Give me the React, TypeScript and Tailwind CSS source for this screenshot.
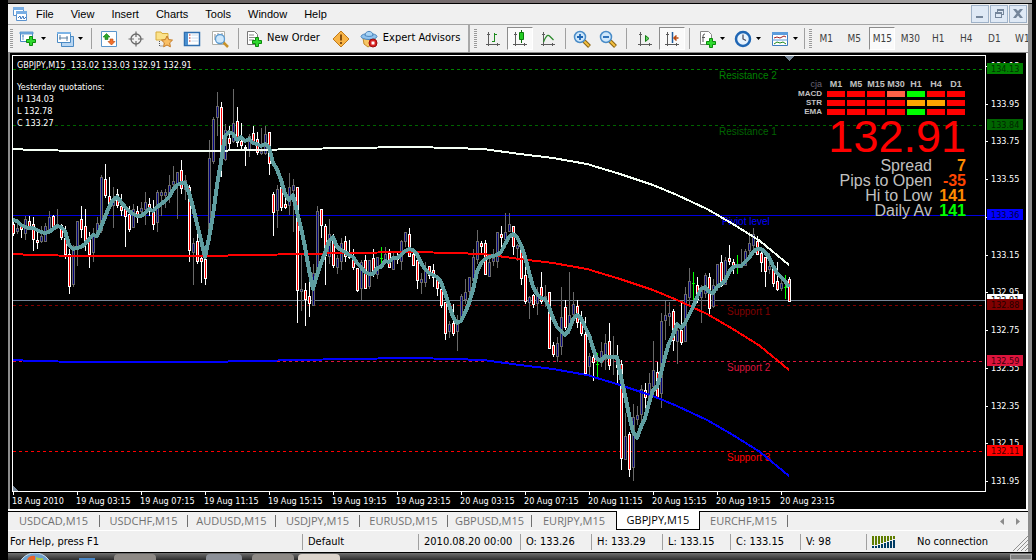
import type { ReactNode } from "react";

type Candle = [dir: number, high: number, top: number, bottom: number, low: number];

// Rows are screen rows; the plot starts at TOP and one bar takes STEP columns.
const TOP = 56;
const STEP = 4;

const candles: Candle[] = [
  [-1, 220, 224, 233, 235], [1, 222, 228, 231, 233], [-1, 223, 226, 229, 237], [1, 216, 219, 233, 239],
  [-1, 216, 221, 227, 228], [-1, 217, 224, 239, 250], [-1, 230, 240, 242, 248], [1, 226, 236, 241, 242],
  [1, 223, 226, 241, 241], [1, 211, 217, 229, 229], [-1, 215, 216, 228, 229], [1, 209, 224, 227, 228],
  [-1, 224, 225, 237, 239], [-1, 226, 238, 254, 258], [-1, 249, 254, 286, 293], [1, 245, 246, 284, 286],
  [1, 221, 221, 247, 265], [-1, 206, 219, 229, 237], [-1, 209, 226, 242, 250], [-1, 232, 240, 254, 267],
  [1, 228, 236, 252, 261], [1, 217, 223, 236, 237], [1, 175, 177, 230, 232], [-1, 164, 179, 195, 197],
  [-1, 177, 196, 206, 207], [1, 187, 198, 205, 227], [-1, 189, 194, 205, 207], [-1, 194, 206, 210, 215],
  [-1, 207, 209, 216, 246], [-1, 206, 214, 229, 231], [1, 204, 209, 227, 227], [-1, 206, 211, 214, 222],
  [1, 202, 208, 211, 217], [1, 192, 202, 209, 224], [-1, 198, 204, 211, 215], [-1, 200, 210, 224, 229],
  [1, 190, 192, 222, 231], [1, 190, 192, 195, 215], [1, 189, 192, 195, 207], [1, 175, 185, 197, 202],
  [1, 166, 181, 184, 190], [1, 172, 172, 184, 218], [-1, 160, 170, 188, 193], [1, 175, 180, 189, 199],
  [-1, 185, 187, 250, 261], [1, 238, 243, 252, 284], [-1, 232, 241, 261, 263], [-1, 257, 258, 261, 282],
  [-1, 257, 259, 278, 284], [1, 140, 158, 235, 236], [1, 117, 119, 161, 163], [1, 92, 106, 117, 135],
  [-1, 102, 107, 158, 176], [1, 124, 130, 159, 160], [-1, 126, 138, 143, 148], [1, 89, 123, 141, 142],
  [-1, 107, 121, 142, 146], [-1, 123, 141, 145, 148], [-1, 145, 147, 148, 165], [1, 134, 136, 150, 156],
  [-1, 126, 133, 141, 142], [-1, 132, 139, 152, 154], [1, 128, 151, 153, 154], [1, 126, 134, 153, 154],
  [-1, 132, 132, 163, 174], [-1, 192, 194, 212, 235], [1, 185, 189, 210, 227], [-1, 186, 187, 207, 210],
  [-1, 197, 204, 207, 208], [1, 173, 187, 205, 214], [1, 179, 185, 190, 231], [-1, 187, 187, 290, 322],
  [1, 253, 289, 291, 310], [-1, 283, 290, 299, 325], [-1, 280, 296, 303, 316], [1, 264, 273, 305, 305],
  [1, 206, 211, 273, 274], [-1, 209, 209, 225, 237], [-1, 224, 226, 255, 284], [1, 219, 234, 256, 263],
  [-1, 234, 236, 265, 267], [1, 255, 258, 267, 273], [1, 238, 243, 261, 269], [-1, 236, 241, 256, 261],
  [-1, 240, 255, 257, 258], [-1, 249, 256, 267, 269], [-1, 268, 268, 290, 291], [1, 260, 262, 288, 299],
  [-1, 255, 260, 288, 288], [1, 260, 260, 286, 288], [-1, 249, 258, 273, 276], [1, 257, 257, 274, 278],
  [0, 247, 258, 258, 264], [1, 247, 254, 262, 263], [-1, 249, 253, 267, 267], [1, 253, 259, 269, 269],
  [-1, 253, 256, 259, 263], [1, 240, 241, 261, 269], [1, 232, 232, 241, 246], [-1, 228, 234, 256, 256],
  [-1, 253, 254, 265, 265], [-1, 258, 260, 280, 288], [1, 273, 279, 282, 293], [1, 262, 270, 282, 286],
  [-1, 266, 266, 275, 278], [-1, 264, 270, 277, 286], [-1, 277, 277, 288, 295], [-1, 287, 289, 305, 307],
  [-1, 302, 302, 333, 339], [1, 321, 324, 331, 337], [-1, 304, 323, 333, 335], [1, 315, 324, 331, 350],
  [1, 294, 296, 321, 321], [1, 279, 292, 299, 303], [1, 277, 277, 291, 301], [1, 249, 257, 280, 289],
  [1, 230, 241, 259, 263], [-1, 241, 243, 246, 254], [-1, 240, 243, 274, 274], [1, 257, 262, 276, 276],
  [1, 249, 258, 261, 265], [1, 232, 232, 261, 267], [-1, 226, 234, 237, 248], [1, 213, 232, 239, 247],
  [1, 213, 224, 231, 231], [-1, 226, 226, 246, 254], [1, 244, 245, 248, 260], [-1, 247, 247, 278, 284],
  [-1, 266, 275, 301, 303], [1, 296, 297, 302, 318], [-1, 294, 295, 304, 307], [1, 287, 292, 303, 314],
  [-1, 272, 287, 301, 303], [1, 285, 296, 300, 306], [-1, 292, 292, 348, 348], [-1, 342, 345, 354, 356],
  [1, 337, 343, 356, 361], [1, 287, 317, 346, 354], [-1, 300, 307, 327, 329], [1, 272, 315, 325, 333],
  [1, 292, 304, 314, 323], [-1, 300, 306, 322, 327], [-1, 311, 321, 333, 335], [-1, 317, 334, 373, 374],
  [1, 353, 356, 366, 374], [-1, 355, 357, 362, 380], [0, 353, 364, 364, 377], [1, 342, 351, 362, 366],
  [1, 334, 343, 359, 369], [-1, 323, 341, 365, 369], [1, 336, 355, 358, 374], [-1, 345, 357, 367, 382],
  [-1, 360, 364, 458, 469], [1, 413, 436, 459, 459], [-1, 432, 434, 469, 476], [1, 404, 417, 467, 480],
  [1, 406, 415, 419, 424], [1, 385, 389, 414, 420], [-1, 383, 390, 397, 410], [1, 373, 383, 403, 405],
  [1, 341, 370, 386, 393], [-1, 362, 372, 397, 397], [1, 313, 321, 393, 407], [1, 301, 315, 320, 339],
  [1, 302, 313, 316, 325], [-1, 309, 311, 340, 350], [1, 324, 330, 341, 363], [-1, 303, 330, 342, 344],
  [1, 287, 294, 341, 341], [1, 268, 281, 297, 304], [0, 272, 283, 283, 301], [-1, 277, 285, 299, 302],
  [1, 285, 287, 297, 322], [1, 273, 275, 293, 297], [-1, 273, 277, 308, 314], [1, 279, 285, 306, 307],
  [1, 264, 264, 287, 290], [-1, 255, 262, 285, 286], [1, 257, 260, 284, 284], [-1, 245, 258, 261, 264],
  [-1, 259, 262, 265, 273], [0, 255, 264, 264, 274], [1, 249, 264, 267, 267], [1, 249, 251, 265, 265],
  [1, 232, 243, 250, 257], [1, 228, 234, 245, 250], [-1, 236, 241, 254, 254], [-1, 250, 253, 262, 271],
  [-1, 257, 257, 271, 286], [1, 253, 266, 269, 273], [-1, 264, 265, 283, 286], [-1, 262, 281, 289, 290],
  [1, 279, 283, 288, 290], [0, 275, 287, 287, 299], [-1, 277, 279, 301, 301],
];

const movingAverage = [
  220, 221, 225, 227, 228, 228, 230, 232, 233, 232, 229, 226, 227, 231, 245, 249, 248, 247, 244, 239,
  235, 236, 227, 217, 207, 200, 197, 202, 207, 211, 214, 216, 216, 213, 209, 211, 207, 204, 201, 197,
  190, 185, 183, 183, 193, 207, 224, 240, 257, 238, 215, 185, 162, 136, 132, 134, 140, 137, 141, 139,
  143, 144, 146, 144, 147, 163, 169, 180, 194, 200, 195, 212, 228, 247, 270, 289, 275, 263, 253, 241,
  237, 247, 250, 252, 255, 257, 263, 267, 272, 274, 274, 268, 267, 261, 262, 258, 258, 255, 251, 249,
  250, 254, 263, 269, 273, 275, 277, 282, 293, 305, 317, 323, 321, 313, 303, 290, 272, 263, 259, 257,
  256, 255, 252, 244, 237, 234, 237, 245, 257, 272, 287, 294, 298, 299, 307, 318, 327, 331, 335, 330,
  319, 315, 318, 327, 335, 348, 359, 361, 356, 357, 357, 357, 377, 395, 415, 432, 438, 427, 418, 403,
  390, 387, 373, 357, 343, 335, 324, 328, 323, 315, 307, 297, 289, 287, 292, 293, 287, 284, 281, 272,
  267, 266, 266, 262, 258, 252, 249, 249, 252, 257, 266, 273, 277, 281, 287,
];

const band: [number, number][] = [
  [0, 254], [20, 255], [70, 256], [190, 256], [240, 255], [290, 254], [330, 253], [400, 252], [440, 253],
  [470, 254], [507, 259], [540, 263], [574, 269], [607, 279], [640, 290], [664, 300], [694, 314],
  [720, 329], [747, 346], [776, 370],
];

const levels = [
  { price: "134.13", y: 69, tag: "#008000", ink: "#003200", line: "#008000", dash: "3 3" },
  { price: "133.84", y: 125, tag: "#006400", ink: "#002600", line: "#006400", dash: "3 3" },
  { price: "133.36", y: 215, tag: "#0000ff", ink: "#00003c", line: "#0000e0", dash: undefined },
  { price: "132.91", y: 300, tag: "#ffffff", ink: "#000000", line: "#778899", dash: undefined },
  { price: "132.88", y: 305, tag: "#800000", ink: "#220000", line: "#800000", dash: "3 3" },
  { price: "132.59", y: 361, tag: "#dc143c", ink: "#38000c", line: "#dc143c", dash: "3 3" },
  { price: "132.11", y: 451, tag: "#ff0000", ink: "#3c0000", line: "#ff0000", dash: "3 3" },
];

const levelNames = [
  { text: "Resistance 2", x: 706, y: 79, color: "#008000" },
  { text: "Resistance 1", x: 706, y: 135, color: "#006400" },
  { text: "Piviot level", x: 709, y: 225, color: "#0000ff" },
  { text: "Support 1", x: 714, y: 315, color: "#800000" },
  { text: "Support 2", x: 714, y: 371, color: "#dc143c" },
  { text: "Support 3", x: 714, y: 461, color: "#ff0000" },
];

const prices = [
  ["134.15", 66], ["133.95", 104], ["133.75", 141], ["133.55", 179], ["133.35", 217], ["133.15", 255],
  ["132.95", 292], ["132.75", 330], ["132.55", 368], ["132.35", 406], ["132.15", 443], ["131.95", 481],
] as const;

const times = [
  "18 Aug 2010", "19 Aug 03:15", "19 Aug 07:15", "19 Aug 11:15", "19 Aug 15:15", "19 Aug 19:15", "19 Aug 23:15",
  "20 Aug 03:15", "20 Aug 07:15", "20 Aug 11:15", "20 Aug 15:15", "20 Aug 19:15", "20 Aug 23:15",
];

const R = "bg-[#ff0000]";
const G = "bg-[#00ff00]";
const O = "bg-[#ffa500]";
const T = "bg-[#ff6347]";
const frames = ["M1", "M5", "M15", "M30", "H1", "H4", "D1"];
const signals = [
  { name: "MACD", cells: [R, R, R, T, G, R, R] },
  { name: "STR", cells: [R, R, R, R, O, O, R] },
  { name: "EMA", cells: [R, R, R, R, G, R, R] },
];

const stats = [
  { label: "Spread", value: "7", color: "text-[#ff8c00]" },
  { label: "Pips to Open", value: "-35", color: "text-[#ff4500]" },
  { label: "Hi to Low", value: "141", color: "text-[#ff8c00]" },
  { label: "Daily Av", value: "141", color: "text-[#00ff00]" },
];

function points(rows: [number, number][], shift = 0) {
  return rows.map(([x, y]) => `${x},${y - TOP + shift}`).join(" ");
}

/* Toolbar pieces */

function Sep() {
  return <span className="mx-1 h-[21px] w-px flex-none bg-[#a0a0a0]" />;
}

function Grip() {
  return <span className="h-5 w-[3px] flex-none bg-[repeating-linear-gradient(#9a9a9a_0_1px,#f4f4f4_1px_2px)]" />;
}

interface ToolProps {
  label: string;
  width?: string;
  pressed?: boolean;
  children: ReactNode;
}

function Tool({ label, width = "w-7", pressed = false, children }: ToolProps) {
  return (
    <button
      aria-label={label}
      title={label}
      className={`flex h-[23px] flex-none items-center justify-center ${width} ${
        pressed ? "border border-[#8c8c8c] border-r-white border-b-white bg-[#fafafa]" : ""
      }`}
    >
      {children}
    </button>
  );
}

function Icon({ children }: { children: ReactNode }) {
  return (
    <svg width="18" height="18" viewBox="0 0 18 18" fill="none" className="flex-none">
      {children}
    </svg>
  );
}

function Caret() {
  return (
    <svg width="5" height="3" viewBox="0 0 5 3" className="ml-1 flex-none">
      <path d="M0 0h5L2.5 3z" fill="#000" />
    </svg>
  );
}

function Plus({ x, y }: { x: number; y: number }) {
  return (
    <path
      transform={`translate(${x} ${y})`}
      d="M3.5.5h3v3h3v3h-3v3h-3v-3h-3v-3h3z"
      fill="#2fd82f"
      stroke="#0b8a0b"
    />
  );
}

function Axes() {
  return (
    <g stroke="#5c5c5c">
      <path d="M4.500 2v14M2 14.500h14" />
      <path d="M3 4.500h3M13.500 13v3" />
    </g>
  );
}

function Magnifier({ plus }: { plus?: boolean }) {
  return (
    <Icon>
      <path d="M11 11l5.500 5.500" stroke="#8a6414" strokeWidth="4" />
      <path d="M11 11l5 5" stroke="#f4c040" strokeWidth="2" />
      <circle cx="7" cy="7" r="5.500" fill="#cfe8fb" stroke="#4a8cc8" strokeWidth="1.500" />
      <path d={plus ? "M4 7h6M7 4v6" : "M4 7h6"} stroke="#1f66b4" strokeWidth="1.800" />
    </Icon>
  );
}

function MenuBar() {
  const items = ["File", "View", "Insert", "Charts", "Tools", "Window", "Help"];
  return (
    <header className="flex h-[21px] items-center border-b border-[#a6a6a6] bg-[#f0f0f0] pr-px">
      <svg width="15" height="15" viewBox="0 0 15 15" className="ml-[5px] flex-none">
        <path d="M.5.500h10v8H.5z" fill="#fff" stroke="#5b93cf" />
        <path d="M0 0h11v3H0z" fill="#79aee4" />
        <path d="M3.500 5.500h10v8h-10z" fill="#fff" stroke="#5b93cf" />
        <path d="M3 4h11v3H3z" fill="#79aee4" />
        <path d="M5 11l2-2 1 3 2-3 1 3 2-2" stroke="#3c78c0" fill="none" />
      </svg>
      <nav className="ml-2 flex flex-1 gap-[17px] font-['Liberation_Sans',sans-serif] text-[11px] leading-4 text-black">
        {items.map((item) => (
          <button key={item}>{item}</button>
        ))}
      </nav>
      <div className="flex gap-px">
        {[
          ["Minimize", "M4 10h7v2H4z"],
          ["Restore", "M6 3h7v6h-2v3H4V6h2zM7 5v1h4v2h1V5zM5 8v3h5V8z"],
          ["Close", "M3 3h3l2 2 2-2h3L9.500 7.500 13 12h-3L8 9.500 6 12H3l3.500-4.500z"],
        ].map(([name, d]) => (
          <button
            key={name}
            aria-label={name}
            className="flex h-[18px] w-[18px] items-center justify-center border border-[#9fb2c8] bg-[#dfe9f5]"
          >
            <svg width="16" height="16" viewBox="0 0 16 16" className="flex-none">
              <path d={d} fill="#75869b" fillRule="evenodd" />
            </svg>
          </button>
        ))}
      </div>
    </header>
  );
}

function ToolBar() {
  return (
    <div className="flex h-7 items-center overflow-hidden border-b border-[#8a8a8a] bg-[#f0f0f0] pl-0.5 text-[11px] text-black">
      <Grip />
      <Tool label="New chart" width="w-[38px]">
        <Icon>
          <path d="M1.500 2.500h12v9h-12z" fill="#fff" stroke="#4a8ac4" />
          <path d="M1 2h13v2H1zM4 5v5M3 6h2" fill="#7db4e6" stroke="#4a8ac4" strokeWidth=".8" />
          <Plus x={7} y={6} />
        </Icon>
        <Caret />
      </Tool>
      <Tool label="Profiles" width="w-9">
        <Icon>
          <path d="M5.500 6.500h12v10h-12z" fill="#b8d6f2" stroke="#4a8ac4" />
          <path d="M1.500 2.500h13v10h-13z" fill="#fff" stroke="#4a8ac4" />
          <path d="M1 2h14v2H1z" fill="#7db4e6" />
          <path d="M4 5v5M3 8h9M11 6v5" stroke="#5a7fa0" />
        </Icon>
        <Caret />
      </Tool>
      <Sep />
      <Tool label="Market Watch" width="w-[26px]">
        <Icon>
          <path d="M1.500 1.500h15v15h-15z" fill="#fff" stroke="#5a96cc" />
          <path d="M6.500 3.500L10 7H8v2.500H5V7H3z" fill="#2ba52b" stroke="#137a13" strokeWidth=".6" />
          <path d="M11.500 15L8 11.500h2V9h3v2.500h2z" fill="#f2702c" stroke="#b84308" strokeWidth=".6" />
        </Icon>
      </Tool>
      <Tool label="Data Window">
        <Icon>
          <circle cx="9" cy="9" r="5" stroke="#6a6a6a" strokeWidth="1.300" />
          <path d="M9 1.500v5.500M9 11v5.500M1.500 9H7M11 9h5.500" stroke="#6a6a6a" strokeWidth="1.200" />
        </Icon>
      </Tool>
      <Tool label="Navigator">
        <Icon>
          <path d="M1 2h5l1 1.500h6V10H1z" fill="#fbe28a" stroke="#d8ac3c" />
          <path d="M4.500 11v5H8" stroke="#555" strokeDasharray="1 1" />
          <path d="M12 6l1.700 3.600 3.800.5-2.800 2.700.7 4L12 15l-3.400 1.800.7-4-2.800-2.700 3.800-.5z" fill="#f9bf65" stroke="#c47a24" />
        </Icon>
      </Tool>
      <Tool label="Terminal">
        <Icon>
          <path d="M1.500 2.500h15v13h-15z" fill="#fff" stroke="#2f6fb0" strokeWidth="1.500" />
          <path d="M2 3h3v12H2z" fill="#4a90d0" />
          <path d="M6 5h1.500M6 8h1.500M6 11h1.500" stroke="#b02020" />
          <path d="M8.500 5H15M8.500 8H15M8.500 11H15" stroke="#c8dcf0" />
        </Icon>
      </Tool>
      <Tool label="Strategy Tester">
        <Icon>
          <path d="M1.500 1.500h12v13h-12z" fill="#fff" stroke="#b0b0a8" />
          <path d="M4 4v6M7 3v4M11 3v4" stroke="#888" />
          <path d="M12 12l5 5" stroke="#c8922a" strokeWidth="2.500" />
          <circle cx="9" cy="9" r="4.500" fill="#cfe8fb" stroke="#5a9ad0" strokeWidth="1.300" />
        </Icon>
      </Tool>
      <Sep />
      <button className="ml-0.5 flex h-[23px] flex-none items-center gap-1 whitespace-nowrap">
        <Icon>
          <path d="M2.500 1.500h7l3 3v10h-10z" fill="#fff" stroke="#777" />
          <path d="M4 5h5M4 7.500h6M4 10h5" stroke="#888" />
          <Plus x={7} y={7} />
        </Icon>
        New Order
      </button>
      <Tool label="MetaEditor" width="ml-2 w-[26px]">
        <Icon>
          <path d="M9 1l8 8-8 8-8-8z" fill="#f8b446" stroke="#c07a1a" />
          <path d="M9 4.500v6M9 12v2" stroke="#7a4408" strokeWidth="1.800" />
        </Icon>
      </Tool>
      <button className="ml-1.5 flex h-[23px] flex-none items-center gap-[5px] whitespace-nowrap">
        <Icon>
          <path d="M3 8h12l-2 6-5 3-4-3z" fill="#f7c765" stroke="#c28a2a" />
          <ellipse cx="9" cy="6.500" rx="8" ry="3" fill="#8ec2ee" stroke="#4a84bc" />
          <path d="M5 5.500C5 0 13 0 13 5.500c-2 1.200-6 1.200-8 0z" fill="#a8d4f6" stroke="#4a84bc" />
          <circle cx="13" cy="13" r="4" fill="#d82020" stroke="#9a0c0c" />
          <path d="M11.500 11.500h3v3h-3z" fill="#fff" />
        </Icon>
        Expert Advisors
      </button>
      <span className="ml-2 h-full w-0.5 flex-none bg-[#a8a8a8]" />
      <span className="ml-1 flex">
        <Grip />
      </span>
      <Tool label="Bar Chart" width="ml-1 w-6">
        <Icon>
          <Axes />
          <path d="M10.500 3v9M10.500 4.500H13M8 11.500h2.500" stroke="#1c8a1c" />
        </Icon>
      </Tool>
      <Tool label="Candlesticks" width="ml-0.5 w-[26px]" pressed>
        <Icon>
          <Axes />
          <path d="M10.500 0v13" stroke="#0b6b0b" />
          <path d="M8.500 2.500h4v7h-4z" fill="#22cc22" stroke="#0b7a0b" />
        </Icon>
      </Tool>
      <Tool label="Line Chart" width="ml-0.5 w-[26px]">
        <Icon>
          <Axes />
          <path d="M4.500 12c2-5 4-8 6-6l4 4" stroke="#2c8a2c" strokeWidth="1.300" />
        </Icon>
      </Tool>
      <Sep />
      <Tool label="Zoom In" width="w-6">
        <Magnifier plus />
      </Tool>
      <Tool label="Zoom Out">
        <Magnifier />
      </Tool>
      <Sep />
      <Tool label="Auto Scroll" width="ml-0.5 w-6">
        <Icon>
          <Axes />
          <path d="M9.500 5.500l3.500 3-3.500 3z" fill="#5fd35f" stroke="#137a13" />
        </Icon>
      </Tool>
      <Tool label="Chart Shift" width="ml-0.5 w-[26px]" pressed>
        <Icon>
          <Axes />
          <path d="M9.500 2v11" stroke="#1f5c9c" strokeWidth="1.500" />
          <path d="M15.500 8H11M13.500 5.500L11 8l2.500 2.500" stroke="#b84a10" strokeWidth="1.500" />
        </Icon>
      </Tool>
      <Sep />
      <Tool label="Indicators" width="w-[34px]">
        <Icon>
          <path d="M2.500 1.500h8l3 3v10h-11z" fill="#fff" stroke="#888" />
          <path d="M5 12V6q0-2 2-2M4 7.500h3" stroke="#555" />
          <Plus x={8} y={8} />
        </Icon>
        <Caret />
      </Tool>
      <Tool label="Periods" width="ml-0.5 w-[34px]">
        <Icon>
          <circle cx="9" cy="9" r="7" fill="#e8f3fd" stroke="#1f66b4" strokeWidth="2.500" />
          <path d="M9 4.500V9l3 1.500" stroke="#445" strokeWidth="1.200" />
        </Icon>
        <Caret />
      </Tool>
      <Tool label="Templates" width="ml-1 w-8">
        <Icon>
          <path d="M1.500 2.500h15v13h-15z" fill="#fff" stroke="#3c7cc0" />
          <path d="M1 2h16v3H1zM1 9.500h16v1H1z" fill="#5c9cdc" />
          <path d="M3 8l3-1 3 1 4-2 2 1" stroke="#a02020" />
          <path d="M3 14l3-2 3 1 3-1 3 2" stroke="#208a20" />
        </Icon>
        <Caret />
      </Tool>
      <Sep />
      <Grip />
      <div className="flex flex-none text-[10px] text-[#404040]">
        {["M1", "M5", "M15", "M30", "H1", "H4", "D1", "W1"].map((tf) => (
          <button
            key={tf}
            className={`mx-px h-[23px] w-[26px] flex-none ${
              tf === "M15" ? "border border-[#8c8c8c] border-r-white border-b-white bg-[#fafafa]" : ""
            }`}
          >
            {tf}
          </button>
        ))}
      </div>
    </div>
  );
}

function Plot() {
  return (
    <svg className="block h-[435px] w-full" shapeRendering="crispEdges">
      {levels.map((l) => (
        <line
          key={l.price}
          x1="0"
          x2="100%"
          y1={l.y - TOP + 0.5}
          y2={l.y - TOP + 0.5}
          stroke={l.line}
          strokeDasharray={l.dash}
        />
      ))}
      {levelNames.map((n) => (
        <text key={n.text} x={n.x} y={n.y - TOP} fill={n.color} className="font-['Liberation_Sans',sans-serif] text-[10px]">
          {n.text}
        </text>
      ))}
      {candles.map(([dir, high, top, bottom, low], i) => {
        const x = i * STEP;
        if (dir === 0) {
          return (
            <g key={i} fill="#00ff00">
              <rect x={x} y={high - TOP} width="1" height={low - high} />
              <rect x={x - 1} y={top - TOP} width="3" height="1" />
            </g>
          );
        }
        return (
          <g key={i}>
            <rect x={x} y={high - TOP} width="1" height={low - high + 1} fill={dir > 0 ? "#696969" : "#fff"} />
            <rect x={x - 1} y={top - TOP} width="3" height={bottom - top + 1} fill={dir > 0 ? "#696969" : "#fff"} />
            <rect
              x={x}
              y={top - TOP + 1}
              width="1"
              height={Math.max(bottom - top - 1, 0)}
              fill={dir > 0 ? "#000080" : "#ff0000"}
            />
          </g>
        );
      })}
      <g fill="none" strokeWidth="2" strokeLinejoin="round">
        <polyline points={points(band, -105)} stroke="#f5fff5" />
        <polyline points={points(band)} stroke="#ff0000" />
        <polyline points={points(band, 106)} stroke="#0000ff" />
        <polyline
          points={points(movingAverage.map((y, i): [number, number] => [i * STEP, y]))}
          stroke="#5f9ea0"
          strokeWidth="4"
        />
      </g>
      <path d="M771 0h10l-5 5zM0 430v5h5z" fill="#778899" />
    </svg>
  );
}

function SignalPanel() {
  return (
    <div className="absolute top-[23px] right-[19px] font-['Liberation_Sans',sans-serif] text-[#c0c0c0]">
      <table className="ml-auto border-collapse">
        <thead>
          <tr className="h-2.5 text-[9px] leading-[10px]">
            <th className="p-0 pr-1 text-right font-normal text-[#696374]">cja</th>
            {frames.map((f) => (
              <th key={f} className="w-5 p-0 whitespace-nowrap">
                {f}
              </th>
            ))}
          </tr>
        </thead>
        <tbody>
          {signals.map((s) => (
            <tr key={s.name} className="h-[9px] text-[8px] leading-[9px]">
              <th className="p-0 pr-1 text-right">{s.name}</th>
              {s.cells.map((c, i) => (
                <td key={i} className="w-5 p-0">
                  <div className={`mx-px h-1.5 ${c}`} />
                </td>
              ))}
            </tr>
          ))}
        </tbody>
      </table>
      <div className="text-right text-[45px] leading-[42px] text-[#ff0000]">132.91</div>
      <dl className="grid grid-cols-[1fr_34px] text-right text-[16px] leading-[15px]">
        {stats.map((s) => (
          <div key={s.label} className="contents">
            <dt>{s.label}</dt>
            <dd className={`font-bold ${s.color}`}>{s.value}</dd>
          </div>
        ))}
      </dl>
    </div>
  );
}

function Chart() {
  return (
    <main className="flex bg-black pt-0.5 pl-0.5 font-['DejaVu_Sans_Condensed','DejaVu_Sans',sans-serif] text-[9px] text-white">
      <div className="min-w-0 flex-1">
        <div className="relative overflow-hidden border border-white">
          <Plot />
          <div className="absolute top-[3px] left-1 leading-3 whitespace-pre">
            <p>GBPJPY,M15{"  "}133.02 133.03 132.91 132.91</p>
            <p className="mt-2.5">Yesterday quotations:</p>
            <p>H 134.03</p>
            <p>L 132.78</p>
            <p>C 133.27</p>
          </div>
          <SignalPanel />
        </div>
        <svg className="block h-[17px] w-full" shapeRendering="crispEdges">
          {times.map((t, i) => (
            <g key={t} fill="#fff">
              <rect x={1 + i * 64} y="0" width="1" height="3" />
              <text x={i * 64} y="12">
                {t}
              </text>
            </g>
          ))}
        </svg>
      </div>
      <svg className="block h-[454px] w-10 flex-none" shapeRendering="crispEdges">
        {prices.map(([label, y]) => (
          <g key={label} fill="#fff">
            <rect x="0" y={y - TOP + 1} width="2" height="1" />
            <text x="5" y={y - TOP + 4}>
              {label}
            </text>
          </g>
        ))}
        {levels.map((l) => (
          <g key={l.price}>
            <rect x="1" y={l.y - TOP - 5} width="36" height="11" fill={l.tag} />
            <text x="5" y={l.y - TOP + 4} fill={l.ink}>
              {l.price}
            </text>
          </g>
        ))}
      </svg>
    </main>
  );
}

function ChartTabs() {
  const tabs = [
    ["USDCAD", "w-[92px]"],
    ["USDCHF", "w-[88px]"],
    ["AUDUSD", "w-[88px]"],
    ["USDJPY", "w-[84px]"],
    ["EURUSD", "w-[88px]"],
    ["GBPUSD", "w-[84px]"],
    ["EURJPY", "w-[84px]"],
    ["GBPJPY", "w-[84px]"],
    ["EURCHF", "w-[88px]"],
  ];
  return (
    <nav className="flex h-[21px] items-start border-t-2 border-white bg-[#f0f0f0] font-['Open_Sans',sans-serif] text-[11px] leading-4 text-[#707070]">
      <div className="flex flex-1 border-t border-black">
        {tabs.map(([tab, width]) =>
          tab === "GBPJPY" ? (
            <button key={tab} className={`-mt-px h-[19px] border border-t-0 border-black bg-white text-black ${width}`}>
              {tab},M15
            </button>
          ) : (
            <button key={tab} className={`flex items-center ${width}`}>
              <span className="flex-1">{tab},M15</span>
              {tab !== "EURJPY" && <span className="h-3 w-px bg-[#707070]" />}
            </button>
          ),
        )}
        <div className="ml-auto flex items-center gap-3 pr-2">
          <button aria-label="Scroll tabs left">
            <svg width="4" height="7" viewBox="0 0 4 7">
              <path d="M4 0v7L0 3.500z" fill="#8c8c8c" />
            </svg>
          </button>
          <button aria-label="Scroll tabs right">
            <svg width="4" height="7" viewBox="0 0 4 7">
              <path d="M0 0v7l4-3.500z" fill="#8c8c8c" />
            </svg>
          </button>
        </div>
      </div>
    </nav>
  );
}

function StatusBar() {
  const cells = [
    ["Default", "w-[116px]"],
    ["2010.08.20 00:00", "w-[102px]"],
    ["O: 133.26", "w-[71px]"],
    ["H: 133.29", "w-[71px]"],
    ["L: 133.15", "w-[68px]"],
    ["C: 133.15", "w-[70px]"],
    ["V: 98", "w-[66px]"],
  ];
  return (
    <footer className="flex h-[22px] items-center border-t border-white bg-[#f0f0f0] text-[11px] leading-4 whitespace-nowrap text-black">
      <span className="flex-1 pl-0.5">For Help, press F1</span>
      {cells.map(([text, width]) => (
        <span key={text} className={`flex-none border-l border-[#a0a0a0] pl-[5px] ${width}`}>
          {text}
        </span>
      ))}
      <span className="flex h-4 w-[162px] flex-none items-center border-l border-[#a0a0a0] pl-[5px]">
        <svg width="24" height="12" viewBox="0 0 24 12" className="mr-[21px] flex-none">
          {[2, 2, 3, 4, 5, 6, 7, 8].map((h, i) => (
            <g key={i}>
              <rect x={i * 3} y="0" width="2" height={11 - h} fill="#5f7d00" />
              <rect x={i * 3} y={12 - h} width="2" height={h} fill="#003c64" />
            </g>
          ))}
        </svg>
        No connection
        <svg width="15" height="15" viewBox="0 0 15 15" className="mt-1 ml-auto flex-none">
          <path d="M0 15L15 0M4 15L15 4M8 15l7-7M12 15l3-3" stroke="#909090" />
        </svg>
      </span>
    </footer>
  );
}

function TaskBar() {
  return (
    <div className="flex h-[8px] items-end overflow-hidden border-t border-black bg-linear-to-b from-[#707070] to-[#2c2c2c]">
      <svg width="36" height="7" viewBox="0 0 36 7" className="mr-[26px] ml-[9px] flex-none">
        <circle cx="18" cy="17" r="17" fill="#6fa0cc" stroke="#cfe2f2" />
        <path d="M10 7q2-5 8-4v4z" fill="#e8642c" />
        <path d="M19 4q4 2 7 1v2h-7z" fill="#a8cc4c" />
      </svg>
      <span className="h-0.5 w-4 bg-[#4a86c4]" />
      <span className="ml-[19px] h-1.5 w-[42px] rounded-t-sm bg-[#8e8a86]" />
      <span className="ml-[50px] h-1.5 w-9 rounded-t-sm bg-[#8c9098]" />
      <span className="ml-2.5 h-1.5 w-[42px] rounded-t-sm bg-[#8e8a86]" />
      <span className="ml-1 h-1.5 w-[42px] rounded-t-sm bg-[#dcd4cc]" />
      <span className="ml-auto h-1.5 w-[22px] border border-[#b0b0b0] bg-[#808080]" />
    </div>
  );
}

export default function App() {
  return (
    <div className="min-h-screen overflow-hidden bg-black pr-1 pl-2 font-['DejaVu_Sans_Condensed','DejaVu_Sans',sans-serif]">
      <div className="h-[3px] bg-linear-to-r from-[#5c5a58] via-[#7a7072] to-[#b4b4b4]" />
      <div className="mt-px border-r-4 border-[#8c8c8c]">
        <MenuBar />
        <ToolBar />
        <div className="border-r-2 border-l-2 border-r-white border-l-[#8c8c8c]">
          <Chart />
        </div>
        <ChartTabs />
        <StatusBar />
      </div>
      <TaskBar />
    </div>
  );
}
